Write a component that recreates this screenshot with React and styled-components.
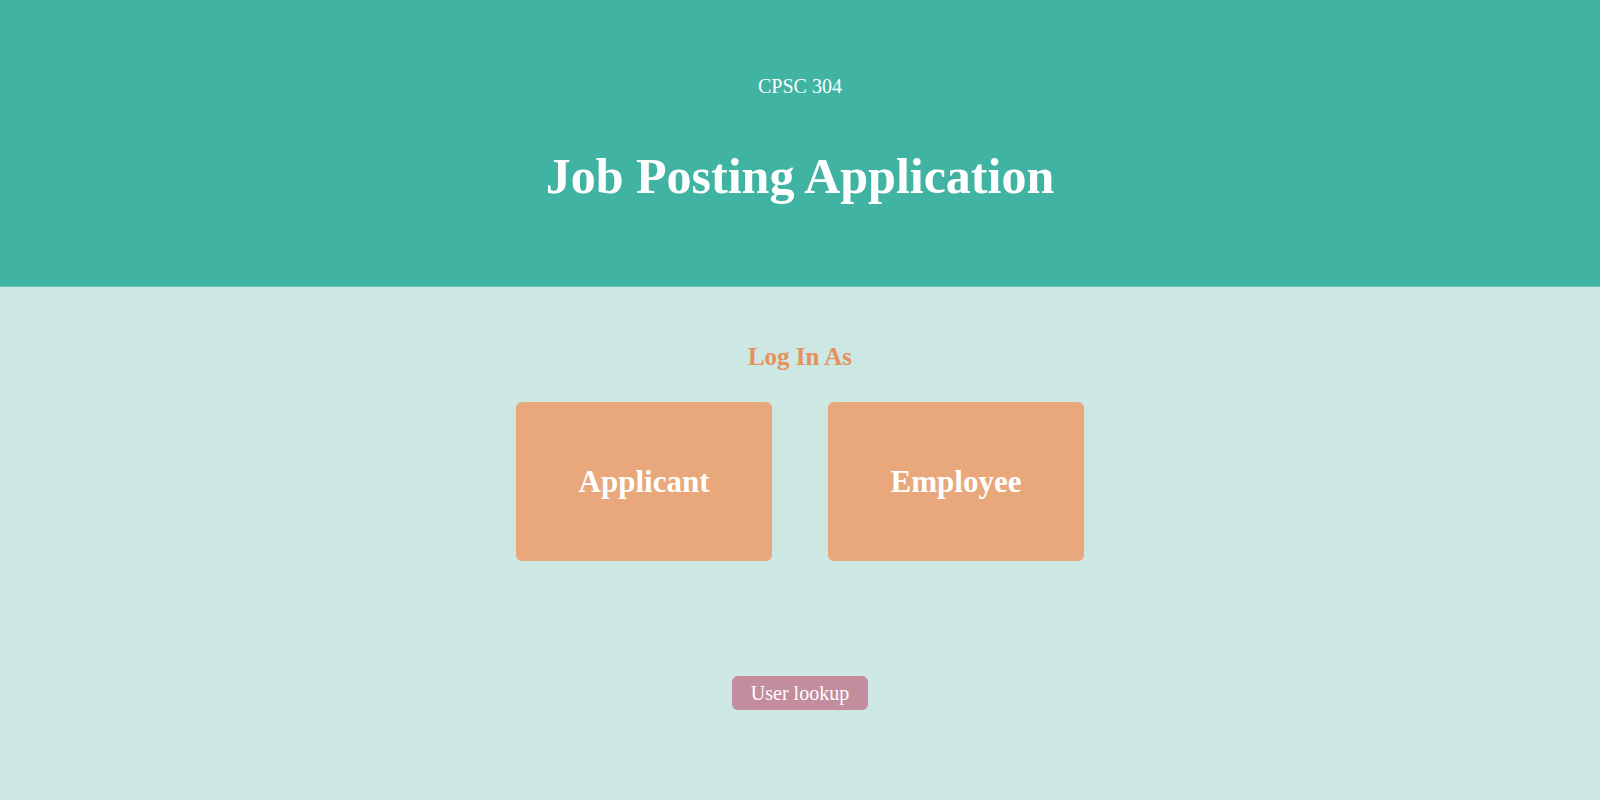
import React from 'react'
import styled, { createGlobalStyle } from 'styled-components'

const GlobalStyle = createGlobalStyle`
  html, body {
    margin: 0;
    padding: 0;
    min-height: 100%;
    background-color: #cde7e3;
  }
  body {
    font-family: "Liberation Serif", "Times New Roman", serif;
  }
`

const Page = styled.div`
  min-height: 800px;
  display: flex;
  flex-direction: column;
`

const Header = styled.header`
  background-color: #41b3a3;
  color: #ffffff;
  text-align: center;
  padding: 75px 0 83px;
  box-shadow: inset 0 -1px 0 rgba(255, 255, 255, 0.2);

  p {
    margin: 0;
    font-size: 20px;
    line-height: 22px;
  }
  h1 {
    margin: 52px 0 0;
    font-size: 50px;
    line-height: 55px;
    font-weight: bold;
  }
`

const Main = styled.main`
  display: flex;
  flex-direction: column;
  align-items: center;
  padding-top: 56px;
`

const SectionTitle = styled.h2`
  margin: 0;
  color: #e5915f;
  font-size: 25px;
  line-height: 28px;
  font-weight: bold;
`

const Choices = styled.div`
  display: flex;
  gap: 56px;
  margin-top: 31px;
`

const RoleCard = styled.button`
  width: 256px;
  height: 159px;
  border: none;
  border-radius: 6px;
  background-color: #e8a87c;
  color: #ffffff;
  font-family: inherit;
  font-size: 31px;
  font-weight: bold;
  display: flex;
  align-items: center;
  justify-content: center;
  cursor: pointer;
  padding: 0;
  transition: transform 0.2s ease;

  &:hover {
    transform: scale(0.98);
  }
`

const LookupButton = styled.button`
  margin-top: 115px;
  border: none;
  border-radius: 6px;
  background-color: #c38d9e;
  color: #ffffff;
  font-family: inherit;
  font-size: 20px;
  line-height: 22px;
  padding: 6px 19px;
  cursor: pointer;
`

const roles = ['Applicant', 'Employee']

const App = () => {
  return (
    <>
      <GlobalStyle />
      <Page>
        <Header>
          <p>CPSC 304</p>
          <h1>Job Posting Application</h1>
        </Header>

        <Main>
          <SectionTitle>Log In As</SectionTitle>
          <Choices>
            {roles.map((role) => (
              <RoleCard key={role}>{role}</RoleCard>
            ))}
          </Choices>
          <LookupButton>User lookup</LookupButton>
        </Main>
      </Page>
    </>
  )
}

export default App
